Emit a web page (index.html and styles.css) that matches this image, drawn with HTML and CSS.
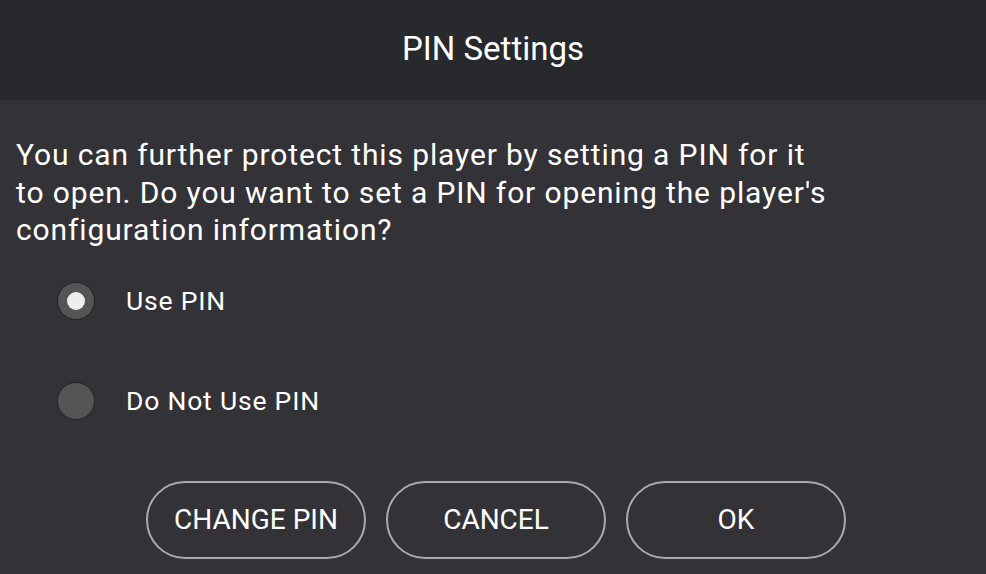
FILE: index.html
```html
<!DOCTYPE html>
<html>
<head>
<meta charset="utf-8">
<link rel="stylesheet" href="styles.css">
</head>
<body>
<div class="dialog">
  <div class="header"><span class="title">PIN Settings</span></div>
  <div class="content">
    <p class="message">You can further protect this player by setting a PIN for it<br>to open. Do you want to set a PIN for opening the player's<br>configuration information?</p>
    <div class="options">
      <div class="option"><span class="radio checked"><span class="dot"></span></span><span class="label">Use PIN</span></div>
      <div class="option"><span class="radio"></span><span class="label">Do Not Use PIN</span></div>
    </div>
    <div class="buttons">
      <button class="btn">CHANGE PIN</button>
      <button class="btn">CANCEL</button>
      <button class="btn">OK</button>
    </div>
  </div>
</div>
</body>
</html>
```
FILE: styles.css
```css
html, body {
  margin: 0;
  padding: 0;
  background: #333237;
  font-family: Roboto, "Liberation Sans", sans-serif;
  color: #ffffff;
}
.dialog {
  width: 986px;
  height: 574px;
  overflow: hidden;
  display: flex;
  flex-direction: column;
}
.header {
  height: 100px;
  background: #28292c;
  display: flex;
  align-items: center;
  justify-content: center;
  padding-bottom: 4px;
  box-sizing: border-box;
}
.title {
  font-size: 33px;
  color: #ffffff;
}
.content {
  padding: 36px 16px 0 16px;
}
.message {
  margin: 0;
  font-size: 30px;
  letter-spacing: 0.87px;
  line-height: 37.5px;
  color: #ffffff;
  white-space: nowrap;
}
.options {
  display: flex;
  flex-direction: column;
  margin-top: 2px;
}
.option {
  height: 100px;
  display: flex;
  align-items: center;
  padding-left: 41px;
}
.radio {
  width: 36px;
  height: 36px;
  border-radius: 50%;
  background: #555456;
  border: 1px solid #232325;
  display: flex;
  align-items: center;
  justify-content: center;
  flex-shrink: 0;
}
.dot {
  width: 18px;
  height: 18px;
  border-radius: 50%;
  background: #eeeeee;
}
.label {
  margin-left: 31px;
  font-size: 26.5px;
  letter-spacing: 0.8px;
}
.buttons {
  display: flex;
  gap: 20px;
  margin-top: 30px;
  padding-left: 130px;
}
.btn {
  width: 220px;
  height: 78px;
  border-radius: 39px;
  border: 2px solid #a9a9ab;
  background: transparent;
  color: #ffffff;
  font-family: Roboto, "Liberation Sans", sans-serif;
  font-size: 28px;
  padding: 0;
}
```
